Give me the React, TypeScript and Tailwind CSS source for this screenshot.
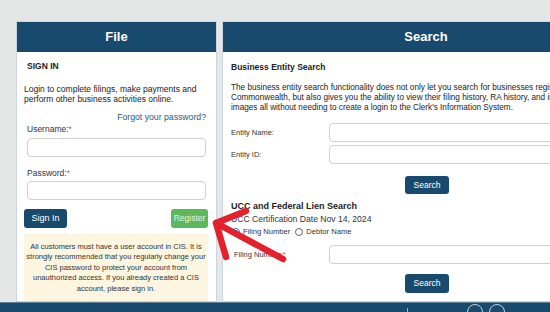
import React from "react";

function Req() {
  return <span className="text-[#d9534f]">*</span>;
}

function Field({ className = "" }: { className?: string }) {
  return (
    <div
      className={`h-[19px] rounded-[4px] border border-[#cfcfcf] bg-white ${className}`}
    />
  );
}

function SignInCard() {
  return (
    <div className="flex w-[201px] shrink-0 flex-col overflow-hidden border border-[#c9d6df] bg-white">
      <div className="flex h-[30px] shrink-0 items-center justify-center bg-[#174a6d] text-[13px] font-bold text-white">
        File
      </div>
      <div className="pl-[7px] pr-[8px] text-[#222]">
        <div className="mt-[7px] pl-[3px] text-[8.5px] leading-[14px] font-bold">SIGN IN</div>
        <p className="mt-[11px] text-[8.5px] leading-[10px]">
          Login to complete filings, make payments and perform other business activities online.
        </p>
        <div className="mt-[7px] pr-[2px] text-right text-[8.7px] leading-[12px] text-[#1d5a8a]">
          Forgot your password?
        </div>
        <div className="pl-[3px] pr-[2px]">
          <div className="text-[8.5px] leading-[12px] text-[#333]">
            Username:<Req />
          </div>
          <Field className="mt-[3px]" />
          <div className="mt-[10px] text-[8.5px] leading-[12px] text-[#333]">
            Password:<Req />
          </div>
          <Field className="mt-[2px]" />
        </div>
        <div className="mt-[9px] flex items-center justify-between">
          <button className="h-[19px] w-[43px] rounded-[3px] bg-[#174a6d] text-[9px] text-white">
            Sign In
          </button>
          <button className="h-[19px] w-[37px] rounded-[3px] bg-[#5cb85c] text-[8.5px] text-[#e6f4e6]">
            Register
          </button>
        </div>
        <div className="mt-[6px] h-[80px] whitespace-nowrap bg-[#fcf6e1] pt-[8px] text-center text-[7.5px] leading-[10.4px] text-[#333]">
          All customers must have a user account in CIS. It is
          <br />
          strongly recommended that you regularly change your
          <br />
          CIS password to protect your account from
          <br />
          unauthorized access. If you already created a CIS
          <br />
          account, please sign in.
        </div>
      </div>
    </div>
  );
}

function SearchCard() {
  return (
    <div className="flex w-[408px] shrink-0 flex-col overflow-hidden border border-[#c9d6df] bg-white">
      <div className="flex h-[30px] shrink-0 items-center justify-center bg-[#174a6d] text-[13px] font-bold text-white">
        Search
      </div>
      <div className="pl-[8px] text-[#222]">
        <div className="mt-[9px] text-[8.5px] leading-[12px] font-bold">Business Entity Search</div>
        <p className="mt-[10px] whitespace-nowrap text-[8.2px] leading-[10px]">
          The business entity search functionality does not only let you search for businesses registered in the
          <br />
          Commonwealth, but also gives you the ability to view their filing history, RA history, and instrument
          <br />
          images all without needing to create a login to the Clerk's Information System.
        </p>
        <div className="mt-[10px] flex items-center">
          <div className="w-[98px] text-[7.5px] text-[#333]">Entity Name:</div>
          <Field className="w-[300px]" />
        </div>
        <div className="mt-[3px] flex items-center">
          <div className="w-[98px] text-[7.5px] text-[#333]">Entity ID:</div>
          <Field className="w-[300px]" />
        </div>
        <div className="mt-[12px] flex pl-[174px]">
          <button className="h-[18px] w-[44px] rounded-[3px] bg-[#174a6d] text-[8.5px] text-white">
            Search
          </button>
        </div>
        <div className="mt-[6px] text-[9px] leading-[12px] font-bold">UCC and Federal Lien Search</div>
        <div className="mt-[1px] text-[8.6px] leading-[13px] text-[#333]">UCC Certification Date Nov 14, 2024</div>
        <div className="flex items-center gap-[3px] text-[7.6px] leading-[12px] text-[#333]">
          <span className="ml-[1px] flex h-[8px] w-[8px] items-center justify-center rounded-full border border-[#1a73e8] bg-white">
            <span className="h-[4px] w-[4px] rounded-full bg-[#1a73e8]" />
          </span>
          <span>Filing Number</span>
          <span className="ml-[2px] h-[8px] w-[8px] rounded-full border border-[#666] bg-white" />
          <span>Debtor Name</span>
        </div>
        <div className="mt-[7px] flex items-center">
          <div className="w-[98px] pl-[3px] text-[7.5px] text-[#333]">
            Filing Number:<Req />
          </div>
          <Field className="w-[300px]" />
        </div>
        <div className="mt-[10px] flex pl-[174px]">
          <button className="h-[19px] w-[44px] rounded-[3px] bg-[#174a6d] text-[8.5px] text-white">
            Search
          </button>
        </div>
      </div>
    </div>
  );
}

export default function App() {
  return (
    <div className="relative h-[312px] w-[550px] overflow-hidden bg-[#e5e7e6] font-['Liberation_Sans',Arial,sans-serif]">
      <div className="flex h-[302px] gap-[5px] pl-[16px] pt-[21px]">
        <SignInCard />
        <SearchCard />
      </div>
      <div className="flex h-[10px] items-start overflow-hidden border-t border-[#5f7f96] bg-[#174a6d] pt-[1px]">
        <div className="ml-[407px] mt-[4px] h-[6px] w-[1px] bg-[#9fb3c2]" />
        <div className="ml-[59px] h-[16px] w-[16px] shrink-0 rounded-full border border-[#c5d2dc]" />
        <div className="ml-[6px] h-[16px] w-[16px] shrink-0 rounded-full border border-[#c5d2dc]" />
      </div>
      <svg
        className="pointer-events-none absolute left-0 top-0"
        width="550"
        height="312"
        viewBox="0 0 550 312"
      >
        <path
          d="M246 211 L216 223 L226 257 M216 223 L283 259"
          fill="none"
          stroke="#e3202b"
          strokeWidth="6.5"
          strokeLinecap="round"
          strokeLinejoin="round"
        />
      </svg>
    </div>
  );
}
